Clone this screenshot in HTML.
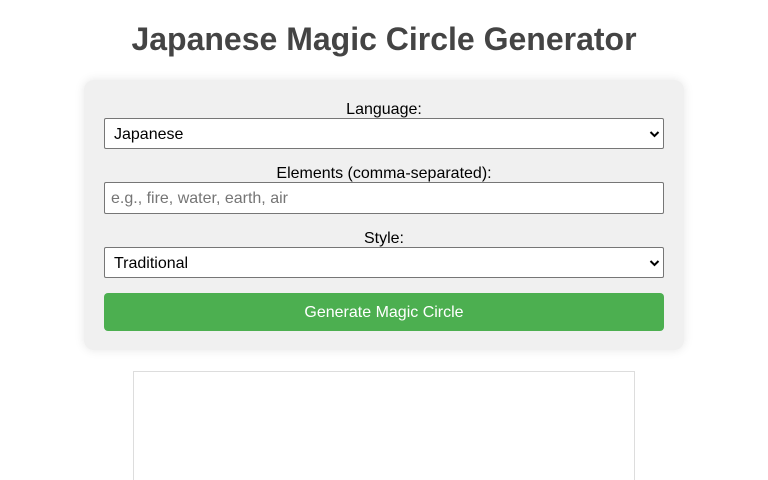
<!DOCTYPE html>
<html><head><meta charset="utf-8"><style>
html,body{margin:0;height:480px;overflow:hidden}
body{background:#fff;font-family:"Liberation Sans",Arial,sans-serif;width:768px;position:relative}
h1{position:absolute;top:20px;left:0;width:768px;margin:0;text-align:center;font-size:32px;font-weight:bold;color:#444;line-height:38px}
.box{position:absolute;left:84px;top:80px;width:600px;height:270px;background:#f0f0f0;border-radius:10px;box-shadow:0 0 10px rgba(0,0,0,0.1)}
.lbl{position:absolute;left:0;width:768px;text-align:center;font-size:16px;color:#000;line-height:18px}
.f{position:absolute;left:104px;width:558px;background:#fff;border:1px solid #767676;border-radius:2px;font-size:16px;box-sizing:content-box}
.f span{position:absolute;left:9px;top:7px}
.chev{position:absolute;right:3px;top:10px}
.btn{position:absolute;left:104px;top:293px;width:560px;height:38px;background:#4caf50;border-radius:4px;color:#fff;font-size:16px;text-align:center;line-height:39px}
.canvas{position:absolute;left:133px;top:371px;width:500px;height:115px;border:1px solid #ddd;border-bottom:none}
</style></head><body>
<h1>Japanese Magic Circle Generator</h1>
<div class="box"></div>
<div class="lbl" style="top:101px">Language:</div>
<div class="f" style="top:118px;height:29px"><span>Japanese</span><svg class="chev" width="11" height="10" viewBox="0 0 11 10"><path d="M1.5 3 L5.5 7 L9.5 3" stroke="#000" stroke-width="2" fill="none"/></svg></div>
<div class="lbl" style="top:165px">Elements (comma-separated):</div>
<div class="f" style="top:182px;height:30px"><span style="left:6px;top:7px;color:#757575">e.g., fire, water, earth, air</span></div>
<div class="lbl" style="top:230px">Style:</div>
<div class="f" style="top:247px;height:29px"><span>Traditional</span><svg class="chev" width="11" height="10" viewBox="0 0 11 10"><path d="M1.5 3 L5.5 7 L9.5 3" stroke="#000" stroke-width="2" fill="none"/></svg></div>
<div class="btn">Generate Magic Circle</div>
<div class="canvas"></div>
</body></html>
